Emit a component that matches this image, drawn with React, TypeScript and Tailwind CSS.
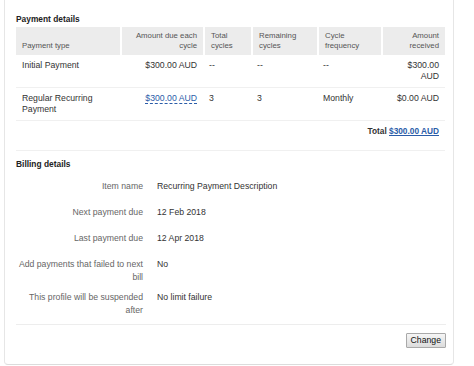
import React from "react";

const font = { fontFamily: '"Liberation Sans", Arial, sans-serif' };

function HeaderCell({ children, right, first }: { children: React.ReactNode; right?: boolean; first?: boolean }) {
  return (
    <div
      className={`flex items-end bg-[#ececec] px-[6px] pb-[4px] pt-[4px] text-[7.8px] leading-[10px] text-[#555] ${
        right ? "justify-end text-right" : ""
      } ${first ? "" : "border-l-2 border-white"}`}
    >
      <span>{children}</span>
    </div>
  );
}

function Cell({ children, right }: { children: React.ReactNode; right?: boolean }) {
  return (
    <div className={`px-[6px] pt-[5px] pb-[6px] text-[8.7px] leading-[10.5px] text-[#333] ${right ? "text-right" : ""}`}>
      {children}
    </div>
  );
}

function BillRow({ label, value }: { label: React.ReactNode; value: React.ReactNode }) {
  return (
    <div className="flex min-h-[26px] pb-[7px] text-[8.7px] leading-[13px]">
      <div className="w-[127px] shrink-0 text-right text-[#666]">{label}</div>
      <div className="ml-[14px] text-[#333]">{value}</div>
    </div>
  );
}

export default function App() {
  return (
    <div className="h-[366px] w-[474px] bg-white" style={font}>
      <div className="ml-[4px] w-[450px] rounded-b-[4px] border-x border-b border-x-[#e6e6e6] border-b-[#dcdcdc] pl-[11px] pr-[7px] pt-[14px] pb-[16px]">
        <div className="text-[8.4px] font-bold leading-[11px] text-[#222]">Payment details</div>
        <div className="mt-[2px] grid grid-cols-[104px_83px_48px_66px_64px_64px]">
          <HeaderCell first>Payment type</HeaderCell>
          <HeaderCell right>Amount due each cycle</HeaderCell>
          <HeaderCell>Total cycles</HeaderCell>
          <HeaderCell>Remaining cycles</HeaderCell>
          <HeaderCell>Cycle frequency</HeaderCell>
          <HeaderCell right>Amount received</HeaderCell>

          <Cell>Initial Payment</Cell>
          <Cell right>$300.00 AUD</Cell>
          <Cell>--</Cell>
          <Cell>--</Cell>
          <Cell>--</Cell>
          <Cell right>
            $300.00
            <br />
            AUD
          </Cell>
          <div className="col-span-6 h-px bg-[#f0f0f0]" />

          <Cell>Regular Recurring Payment</Cell>
          <Cell right>
            <span className="border-b border-dashed border-[#2a5ca8] text-[#2a5ca8]">$300.00 AUD</span>
          </Cell>
          <Cell>3</Cell>
          <Cell>3</Cell>
          <Cell>Monthly</Cell>
          <Cell right>$0.00 AUD</Cell>
          <div className="col-span-6 h-px bg-[#f0f0f0]" />

          <div className="col-span-6 h-[29px] pt-[5px] pr-[6px] text-right text-[8.3px] font-bold leading-[11px] text-[#333]">
            Total <span className="text-[#2a5ca8] underline">$300.00 AUD</span>
          </div>
          <div className="col-span-6 h-px bg-[#f0f0f0]" />
        </div>

        <div className="mt-[8px] text-[8.4px] font-bold leading-[11px] text-[#222]">Billing details</div>
        <div className="mt-[10px]">
          <BillRow label="Item name" value="Recurring Payment Description" />
          <BillRow label="Next payment due" value="12 Feb 2018" />
          <BillRow label="Last payment due" value="12 Apr 2018" />
          <BillRow label="Add payments that failed to next bill" value="No" />
          <BillRow label="This profile will be suspended after" value="No limit failure" />
        </div>
        <div className="h-px bg-[#ededed]" />
        <div className="mt-[8px] flex justify-end">
          <button className="h-[15px] rounded-[1px] border border-[#a9a9a9] bg-gradient-to-b from-[#f6f6f6] to-[#dcdcdc] px-[4px] text-[8.7px] leading-[13px] text-[#111]">
            Change
          </button>
        </div>
      </div>
    </div>
  );
}
